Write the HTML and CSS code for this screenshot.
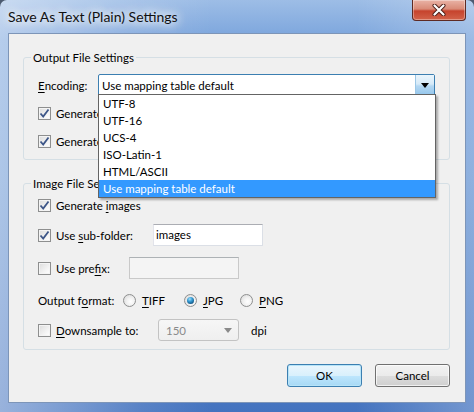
FILE: index.html
```html
<!DOCTYPE html>
<html lang="en">
<head>
    <meta charset="UTF-8">
    <meta name="viewport" content="width=device-width, initial-scale=1.0">
    <title>Save As Text (Plain) Settings</title>
    <link rel="stylesheet" href="styles.css">
</head>
<body>
    <div class="window">
        <div class="titlebar">
            <span class="title">Save As Text (Plain) Settings</span>
            <span class="close-btn">
                <svg width="14" height="12" viewBox="0 0 14 12">
                    <path d="M2.5 1.5 L11.5 10.5 M11.5 1.5 L2.5 10.5" stroke="#4a1d16" stroke-width="4" stroke-linecap="round"/>
                    <path d="M2.5 1.5 L11.5 10.5 M11.5 1.5 L2.5 10.5" stroke="#fff" stroke-width="2.2" stroke-linecap="round"/>
                </svg>
            </span>
        </div>

        <div class="client">
            <fieldset class="group group-output">
                <legend>Output File Settings</legend>
                <div class="row">
                    <span class="lbl lbl-enc"><u>E</u>ncoding:</span>
                    <div class="combo combo-active">
                        <span class="combo-text">Use mapping table default</span>
                        <span class="combo-btn">
                            <svg width="8" height="5" viewBox="0 0 8 5"><path d="M0 0 H8 L4 5 Z" fill="#000"/></svg>
                        </span>
                        <ul class="dropdown">
                            <li>UTF-8</li>
                            <li>UTF-16</li>
                            <li>UCS-4</li>
                            <li>ISO-Latin-1</li>
                            <li>HTML/ASCII</li>
                            <li class="selected">Use mapping table default</li>
                        </ul>
                    </div>
                </div>
                <div class="row">
                    <span class="check">
                        <svg width="11" height="11" viewBox="0 0 11 11"><path d="M1.5 5.5 L4.2 8.6 L9.5 1.5" fill="none" stroke="#3d5688" stroke-width="1.8"/></svg>
                    </span>
                    <span>Generate</span>
                </div>
                <div class="row">
                    <span class="check">
                        <svg width="11" height="11" viewBox="0 0 11 11"><path d="M1.5 5.5 L4.2 8.6 L9.5 1.5" fill="none" stroke="#3d5688" stroke-width="1.8"/></svg>
                    </span>
                    <span>Generate</span>
                </div>
            </fieldset>

            <fieldset class="group group-image">
                <legend>Image File Settings</legend>
                <div class="row row-a">
                    <span class="check">
                        <svg width="11" height="11" viewBox="0 0 11 11"><path d="M1.5 5.5 L4.2 8.6 L9.5 1.5" fill="none" stroke="#3d5688" stroke-width="1.8"/></svg>
                    </span>
                    <span>Generate <u>i</u>mages</span>
                </div>
                <div class="row row-b">
                    <span class="lbl lbl-sub">
                        <span class="check">
                            <svg width="11" height="11" viewBox="0 0 11 11"><path d="M1.5 5.5 L4.2 8.6 L9.5 1.5" fill="none" stroke="#3d5688" stroke-width="1.8"/></svg>
                        </span>
                        <span>Use <u>s</u>ub-folder:</span>
                    </span>
                    <span class="textbox">images</span>
                </div>
                <div class="row row-c">
                    <span class="lbl lbl-prefix">
                        <span class="check"></span>
                        <span>Use pre<u>f</u>ix:</span>
                    </span>
                    <span class="textbox disabled"></span>
                </div>
                <div class="row row-d">
                    <span class="lbl lbl-format">Output f<u>o</u>rmat:</span>
                    <span class="radio-opt opt-tiff"><span class="radio"></span><span><u>T</u>IFF</span></span>
                    <span class="radio-opt opt-jpg"><span class="radio on"></span><span><u>J</u>PG</span></span>
                    <span class="radio-opt"><span class="radio"></span><span><u>P</u>NG</span></span>
                </div>
                <div class="row row-e">
                    <span class="lbl lbl-down">
                        <span class="check"></span>
                        <span><u>D</u>ownsample to:</span>
                    </span>
                    <div class="combo combo-disabled">
                        <span class="combo-text">150</span>
                        <span class="combo-btn">
                            <svg width="8" height="5" viewBox="0 0 8 5"><path d="M0 0 H8 L4 5 Z" fill="#8a8a8a"/></svg>
                        </span>
                    </div>
                    <span class="unit">dpi</span>
                </div>
            </fieldset>

            <div class="buttons">
                <button class="btn btn-default">OK</button>
                <button class="btn">Cancel</button>
            </div>
        </div>
    </div>
</body>
</html>
```

FILE: styles.css
```css
* {
    box-sizing: border-box;
}
body {
    margin: 0;
    background: #4b5a70;
    font-family: Lato, "Noto Sans", sans-serif;
    font-size: 11.5px;
    color: #000;
}
u {
    text-decoration-thickness: 1px;
    text-underline-offset: 2px;
}
.window {
    width: 474px;
    height: 412px;
    padding: 0 8px 9px 8px;
    border-radius: 7px 7px 0 0;
    display: flex;
    flex-direction: column;
    background:
        linear-gradient(to right, rgba(255,255,255,0.45) 0, rgba(255,255,255,0.1) 30%, rgba(255,255,255,0) 45%, rgba(255,255,255,0) 75%, rgba(255,255,255,0.25) 100%),
        linear-gradient(to bottom, #9dbde6 0, #7aa4dc 40px, #6a97d4 180px, #4473bf 412px);
}
.titlebar {
    height: 33px;
    display: flex;
    justify-content: space-between;
    align-items: flex-start;
}
.title {
    margin-top: 8px;
    font-size: 14px;
    line-height: 18px;
    color: #111;
    text-shadow: 0 0 8px #fff, 0 0 12px #fff, 0 0 18px rgba(255,255,255,0.9);
}
.close-btn {
    width: 54px;
    height: 21px;
    border: 1px solid #5e2a23;
    border-top: none;
    border-radius: 0 0 4px 4px;
    background: linear-gradient(to bottom, #e9b3a6 0, #d98a77 45%, #c6432d 55%, #d2634a 100%);
    box-shadow: inset 0 0 0 1px rgba(255,255,255,0.35);
    display: flex;
    align-items: center;
    justify-content: center;
}
.client {
    flex: 1;
    background: #f0f0f0;
    border: 1px solid #7d95b8;
    padding: 16px 15px 0 14px;
}
.group {
    margin: 0;
    min-width: 0;
    border: 1px solid #d5dfe5;
    border-radius: 3px;
    padding: 6px 14px 4px 14px;
}
.group legend {
    padding: 0 2px;
    margin-left: -7px;
    line-height: 15px;
}
.group-image {
    margin-top: 16px;
    padding-top: 0;
}
.row {
    height: 28px;
    display: flex;
    align-items: center;
    white-space: nowrap;
}
.row-b { height: 32px; }
.row-c { height: 34px; }
.row-d { height: 30px; }
.row-e { height: 30px; }
.lbl {
    display: flex;
    align-items: center;
    flex-shrink: 0;
}
.lbl-enc { width: 60px; }
.lbl-sub { width: 115px; }
.lbl-prefix { width: 91px; }
.lbl-format { width: 85px; }
.lbl-down { width: 120px; }

.check {
    width: 13px;
    height: 13px;
    margin-right: 5px;
    border: 1px solid #8e8f8f;
    background: linear-gradient(135deg, #dcdcdc 0, #f6f6f6 70%, #fff 100%);
    box-shadow: inset 0 0 0 1px #f4f4f4;
    display: flex;
    align-items: center;
    justify-content: center;
    flex-shrink: 0;
}
.radio-opt {
    display: flex;
    align-items: center;
}
.opt-tiff { width: 61px; }
.opt-jpg { width: 56px; }
.radio {
    width: 13px;
    height: 13px;
    margin-right: 6px;
    border-radius: 50%;
    border: 1px solid #8e8f8f;
    background: radial-gradient(circle at 60% 60%, #fff 0, #f2f2f2 40%, #d4d4d4 100%);
    display: flex;
    align-items: center;
    justify-content: center;
}
.radio.on::after {
    content: "";
    width: 7px;
    height: 7px;
    border-radius: 50%;
    background: radial-gradient(circle at 40% 30%, #a6e0f8 0, #3aa0d8 35%, #0d4f7e 80%);
}

.combo {
    position: relative;
    height: 22px;
    display: flex;
    align-items: center;
    background: #fff;
}
.combo-active {
    width: 337px;
    border: 1px solid #3c7fb1;
    border-radius: 2px;
}
.combo-text {
    flex: 1;
    padding-left: 3px;
    white-space: nowrap;
}
.combo-active .combo-btn {
    width: 19px;
    height: 100%;
    border-left: 1px solid #9cc7e6;
    background: linear-gradient(to bottom, #eaf5fc 0, #d6eaf8 45%, #b3d7f2 55%, #94c6ec 100%);
    display: flex;
    align-items: center;
    justify-content: center;
}
.dropdown {
    position: absolute;
    top: calc(100% - 1px);
    left: -1px;
    right: -2px;
    margin: 0;
    padding: 0;
    list-style: none;
    background: #fff;
    border: 1px solid #646464;
    box-shadow: 2px 2px 2px rgba(0,0,0,0.3);
    z-index: 5;
}
.dropdown li {
    height: 17px;
    line-height: 17px;
    padding-left: 4px;
}
.dropdown li.selected {
    background: #3399ff;
    color: #fff;
}
.combo-disabled {
    width: 81px;
    border: 1px solid #c3c3c3;
    border-radius: 3px;
    background: linear-gradient(to bottom, #f6f6f6 0, #efefef 100%);
    color: #8a8a8a;
}
.combo-disabled .combo-text {
    padding-left: 7px;
}
.combo-disabled .combo-btn {
    width: 20px;
    display: flex;
    justify-content: center;
}
.unit {
    margin-left: 12px;
}

.textbox {
    width: 110px;
    height: 22px;
    padding-left: 2px;
    line-height: 20px;
    background: #fff;
    border: 1px solid #dbdfe6;
    border-top-color: #abadb3;
    border-left-color: #e2e3ea;
}
.textbox.disabled {
    background: #f4f4f4;
    border-color: #c9c9c9;
    border-top-color: #adb2b5;
}

.buttons {
    margin-top: 14px;
    display: flex;
    justify-content: flex-end;
    gap: 13px;
}
.btn {
    width: 75px;
    height: 23px;
    padding: 0;
    font-family: inherit;
    font-size: 11.5px;
    color: #000;
    border: 1px solid #707070;
    border-radius: 3px;
    background: linear-gradient(to bottom, #f2f2f2 0, #ebebeb 50%, #dddddd 51%, #cfcfcf 100%);
    box-shadow: inset 0 0 0 1px rgba(255,255,255,0.7);
}
.btn-default {
    border-color: #3c7fb1;
    background: linear-gradient(to bottom, #eaf6fd 0, #d9f0fc 50%, #bee6fd 51%, #a7d9f5 100%);
    box-shadow: inset 0 0 0 1px #b7e4f8;
}
```
